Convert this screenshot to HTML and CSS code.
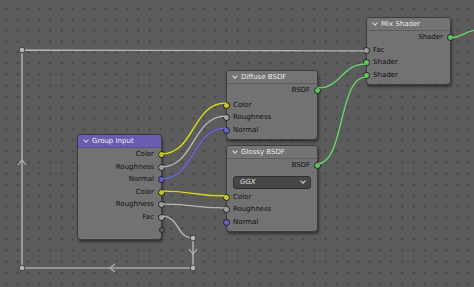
FILE: index.html
```html
<!DOCTYPE html>
<html lang="en">
<head>
  <meta charset="UTF-8" />
  <title>Node Editor</title>
  <link rel="stylesheet" href="styles.css">
</head>
<body>

  <div class="editor">
    <!-- links between sockets -->
    <svg class="links" width="474" height="287" viewBox="0 0 474 287">
      <g class="wire gray">
        <path d="M193,238 L193,268 L22,268 L22,50 L366,51" />
        <path d="M161,167 C195,167 192,116 226,116" />
        <path d="M161,204 C195,204 192,208 226,208" />
        <path d="M161,216 C180,216 176,238 193,238" />
      </g>
      <g class="wire yellow">
        <path d="M161,154 C195,154 192,103 226,103" />
        <path d="M161,191 C195,191 192,196 226,196" />
      </g>
      <g class="wire purple">
        <path d="M161,179 C195,179 192,128 226,128" />
      </g>
      <g class="wire green">
        <path d="M317,88 C342,88 341,64 366,64" />
        <path d="M317,164 C345,164 338,77 366,77" />
        <path d="M449,38 C462,38 462,32 476,30" />
      </g>
      <!-- flow arrows -->
      <g class="arrow">
        <path d="M18,165 L22,160 L26,165" />
        <path d="M115,264 L110,268 L115,272" />
        <path d="M189,249 L193,254 L197,249" />
      </g>
      <!-- reroute points -->
      <g class="reroute">
        <circle cx="22" cy="50" r="2.8" />
        <circle cx="22" cy="268" r="2.8" />
        <circle cx="193" cy="268" r="2.8" />
        <circle cx="193" cy="238" r="2.8" />
      </g>
    </svg>

    <!-- Mix Shader -->
    <div class="node mix">
      <div class="node-head"><span class="chev"></span>Mix Shader</div>
      <div class="row out">Shader<i class="sock green"></i></div>
      <div class="row"><i class="sock gray"></i>Fac</div>
      <div class="row"><i class="sock green"></i>Shader</div>
      <div class="row"><i class="sock green"></i>Shader</div>
    </div>

    <!-- Diffuse BSDF -->
    <div class="node diffuse">
      <div class="node-head"><span class="chev"></span>Diffuse BSDF</div>
      <div class="row out">BSDF<i class="sock green"></i></div>
      <div class="gap"></div>
      <div class="row"><i class="sock yellow"></i>Color</div>
      <div class="row"><i class="sock gray"></i>Roughness</div>
      <div class="row"><i class="sock purple"></i>Normal</div>
    </div>

    <!-- Glossy BSDF -->
    <div class="node glossy">
      <div class="node-head"><span class="chev"></span>Glossy BSDF</div>
      <div class="row out">BSDF<i class="sock green"></i></div>
      <div class="select"><span>GGX</span><span class="chev"></span></div>
      <div class="row"><i class="sock yellow"></i>Color</div>
      <div class="row"><i class="sock gray"></i>Roughness</div>
      <div class="row"><i class="sock purple"></i>Normal</div>
    </div>

    <!-- Group Input -->
    <div class="node group">
      <div class="node-head"><span class="chev"></span>Group Input</div>
      <div class="row out">Color<i class="sock yellow"></i></div>
      <div class="row out">Roughness<i class="sock gray"></i></div>
      <div class="row out">Normal<i class="sock purple"></i></div>
      <div class="row out">Color<i class="sock yellow"></i></div>
      <div class="row out">Roughness<i class="sock gray"></i></div>
      <div class="row out">Fac<i class="sock gray"></i></div>
      <div class="row out"><i class="sock empty"></i></div>
    </div>
  </div>

</body>
</html>
```

FILE: styles.css
```css
body {
  margin: 0;
  font-family: "DejaVu Sans", sans-serif;
  background-color: #5a5a5a;
}
.editor {
  position: relative;
  width: 474px;
  height: 287px;
  overflow: hidden;
  background-color: #5c5c5c;
  background-image: radial-gradient(circle, #464646 0.9px, transparent 1.3px);
  background-size: 11px 11px;
  background-position: 1px 3px;
}
.links {
  position: absolute;
  left: 0;
  top: 0;
  z-index: 2;
}
.wire path {
  fill: none;
  stroke-width: 1.6;
  filter: drop-shadow(0 0 0.6px #2c2c2c);
}
.wire.gray path { stroke: #b4b4b4; }
.wire.yellow path { stroke: #d6d62a; }
.wire.purple path { stroke: #6a6ad8; }
.wire.green path { stroke: #6ccf6c; }
.arrow path {
  fill: none;
  stroke: #b4b4b4;
  stroke-width: 1.2;
}
.reroute circle {
  fill: #b8b8b8;
  stroke: #2e2e2e;
  stroke-width: 0.8;
}

/* nodes */
.node {
  position: absolute;
  z-index: 1;
  background: #727272;
  border: 1px solid #3c3c3c;
  border-radius: 4px;
  box-shadow: 1px 2px 3px rgba(0, 0, 0, 0.45);
  font-size: 7px;
  color: #111;
  padding-bottom: 3px;
}
.node-head {
  display: flex;
  align-items: center;
  gap: 4px;
  height: 12px;
  padding-left: 6px;
  color: #eaeaea;
  background: #747474;
  border-bottom: 1px solid #5e5e5e;
  border-radius: 3px 3px 0 0;
  white-space: nowrap;
}
.chev {
  width: 3px;
  height: 3px;
  border-right: 1px solid #d8d8d8;
  border-bottom: 1px solid #d8d8d8;
  transform: rotate(45deg);
  margin-top: -3px;
}
.row {
  position: relative;
  height: 12.5px;
  line-height: 12.5px;
  padding-left: 6px;
  white-space: nowrap;
}
.row.out {
  text-align: right;
  padding-left: 0;
  padding-right: 7px;
}
.gap {
  height: 2px;
}
.sock {
  position: absolute;
  top: 3px;
  left: -4px;
  width: 5px;
  height: 5px;
  border-radius: 50%;
  border: 1px solid #1c1c1c;
}
.row.out .sock {
  left: auto;
  right: -4px;
}
.sock.green { background: #63c763; }
.sock.gray { background: #a1a1a1; }
.sock.yellow { background: #c7c729; }
.sock.purple { background: #6363c7; }
.sock.empty {
  background: #5e5e5e;
  border-color: #2a2a2a;
  width: 4px;
  height: 4px;
  right: -3.5px;
  top: 3.5px;
}

.mix {
  left: 366px;
  top: 17px;
  width: 83px;
}
.diffuse {
  left: 226px;
  top: 70px;
  width: 90px;
}
.glossy {
  left: 226px;
  top: 145px;
  width: 90px;
}
.group {
  left: 77px;
  top: 134px;
  width: 83px;
}
.group .node-head {
  background: #6a5cb2;
  border-bottom-color: #5a4e9a;
  color: #f0f0f0;
}
.select {
  display: flex;
  justify-content: space-between;
  align-items: center;
  margin: 4px 6px 2px 6px;
  height: 11px;
  padding: 0 5px 0 6px;
  background: #474747;
  border: 1px solid #2e2e2e;
  border-radius: 3px;
  color: #e6e6e6;
  font-style: italic;
}
```
